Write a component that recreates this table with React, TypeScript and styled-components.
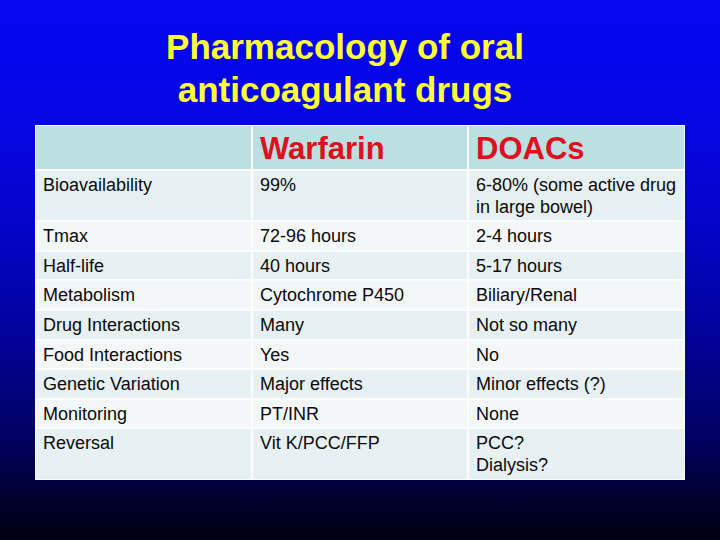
import React from "react";
import styled, { createGlobalStyle } from "styled-components";

const GlobalStyle = createGlobalStyle`
  html, body {
    margin: 0;
    padding: 0;
  }
  body {
    font-family: "Liberation Sans", Arial, sans-serif;
  }
`;

const Slide = styled.div`
  width: 720px;
  height: 540px;
  box-sizing: border-box;
  background: linear-gradient(
    to bottom,
    #0606f2 0%,
    #0505e4 22%,
    #0404c8 42%,
    #02029a 62%,
    #01015e 82%,
    #00000c 100%
  );
  display: flex;
  flex-direction: column;
  align-items: flex-start;
  padding: 25px 0 0 35px;
  overflow: hidden;
`;

const Title = styled.h1`
  margin: 0;
  width: 620px;
  text-align: center;
  font-family: "Liberation Sans", Arial, sans-serif;
  font-weight: bold;
  font-size: 35px;
  line-height: 43px;
  color: #ffff33;
`;

const Table = styled.div`
  margin-top: 14px;
  display: grid;
  grid-template-columns: 215px 214px 215px;
  gap: 2px;
  padding: 1px 1px 1px 1px;
  background: #fbfdfd;
`;

const HeadCell = styled.div`
  background: #bcdfe2;
  height: 43px;
  box-sizing: border-box;
  padding: 2px 7px 0;
  font-weight: bold;
  font-size: 31px;
  line-height: 41px;
  color: #dd111c;
`;

const Cell = styled.div<{ $shade: boolean }>`
  background: ${(p) => (p.$shade ? "#e7f0f3" : "#f3f7f8")};
  box-sizing: border-box;
  padding: 4px 7px 2px;
  font-size: 18px;
  line-height: 21.6px;
  color: #0a0a0a;
  white-space: pre-line;
`;

const rows: [string, string, string][] = [
  ["Bioavailability", "99%", "6-80% (some active drug\nin large bowel)"],
  ["Tmax", "72-96 hours", "2-4 hours"],
  ["Half-life", "40 hours", "5-17 hours"],
  ["Metabolism", "Cytochrome P450", "Biliary/Renal"],
  ["Drug Interactions", "Many", "Not so many"],
  ["Food Interactions", "Yes", "No"],
  ["Genetic Variation", "Major effects", "Minor effects (?)"],
  ["Monitoring", "PT/INR", "None"],
  ["Reversal", "Vit K/PCC/FFP", "PCC?\nDialysis?"],
];

export default function App() {
  return (
    <>
      <GlobalStyle />
      <Slide>
        <Title>
          Pharmacology of oral
          <br />
          anticoagulant drugs
        </Title>
        <Table>
          <HeadCell />
          <HeadCell>Warfarin</HeadCell>
          <HeadCell>DOACs</HeadCell>
          {rows.map((r, i) =>
            r.map((c, j) => (
              <Cell key={`${i}-${j}`} $shade={i % 2 === 0}>
                {c}
              </Cell>
            ))
          )}
        </Table>
      </Slide>
    </>
  );
}
